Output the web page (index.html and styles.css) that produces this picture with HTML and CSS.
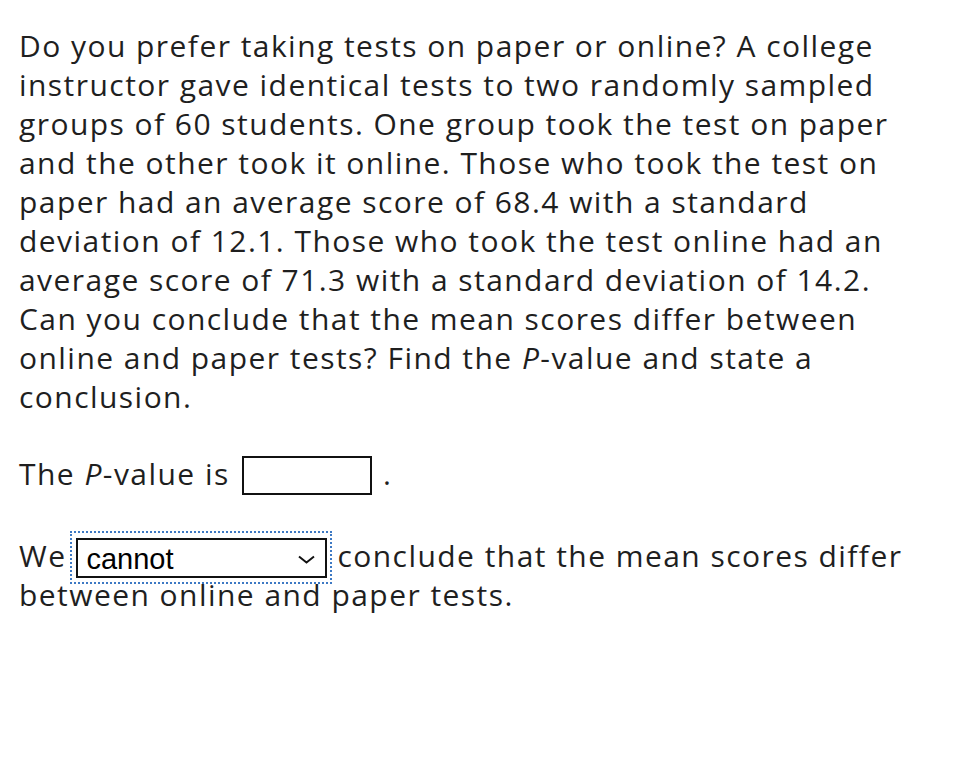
FILE: index.html
```html
<!DOCTYPE html>
<html>
<head>
<meta charset="utf-8">
<link rel="stylesheet" href="styles.css">
</head>
<body>
<div class="question">
  <p class="stem">Do you prefer taking tests on paper or online? A college<br>
  instructor gave identical tests to two randomly sampled<br>
  groups of 60 students. One group took the test on paper<br>
  and the other took it online. Those who took the test on<br>
  paper had an average score of 68.4 with a standard<br>
  deviation of 12.1. Those who took the test online had an<br>
  average score of 71.3 with a standard deviation of 14.2.<br>
  Can you conclude that the mean scores differ between<br>
  online and paper tests? Find the <i>P</i>-value and state a<br>
  conclusion.</p>
  <p class="answer">The <i>P</i>-value is <span class="blank"></span><span class="dot">.</span></p>
  <p class="answer conclusion">We<span class="focus"><span class="select">cannot<svg class="chev" viewBox="0 0 19 9" width="19" height="9"><path d="M2 1.5 L9.5 7.5 L17 1.5" fill="none" stroke="#111" stroke-width="2"/></svg></span></span>conclude that the mean scores differ<br>between online and paper tests.</p>
</div>
</body>
</html>
```
FILE: styles.css
```css
html, body { margin: 0; padding: 0; background: #fff; }
body {
  font-family: "Open Sans", Lato, sans-serif;
  color: #1f1f1f;
}
.question {
  padding: 26px 0 0 19px;
  width: 930px;
  font-size: 30px;
  line-height: 39px;
  letter-spacing: 1.45px;
}
.stem { margin: 0; }
.answer { margin: 38px 0 0; white-space: nowrap; }
.blank {
  display: inline-block;
  width: 126px;
  height: 35px;
  border: 2px solid #111;
  vertical-align: -10px;
  margin-left: 3px;
}
.dot { margin-left: 11px; }
.conclusion { margin-top: 41px; }
.focus {
  display: inline-block;
  overflow: hidden;
  border: 2px dotted #3d79c4;
  padding: 5px 3px 4px 4px;
  margin: -12px 5px -14px 4px;
  vertical-align: -3px;
  line-height: 0;
  letter-spacing: 0;
}
.select {
  display: flex;
  align-items: center;
  justify-content: space-between;
  box-sizing: border-box;
  width: 251px;
  height: 40px;
  border: 2px solid #111;
  padding: 2px 9px 0 8px;
  font-family: "Liberation Sans", Arial, sans-serif;
  font-size: 29px;
  line-height: 1;
  color: #000;
}
.chev { display: block; }
```
